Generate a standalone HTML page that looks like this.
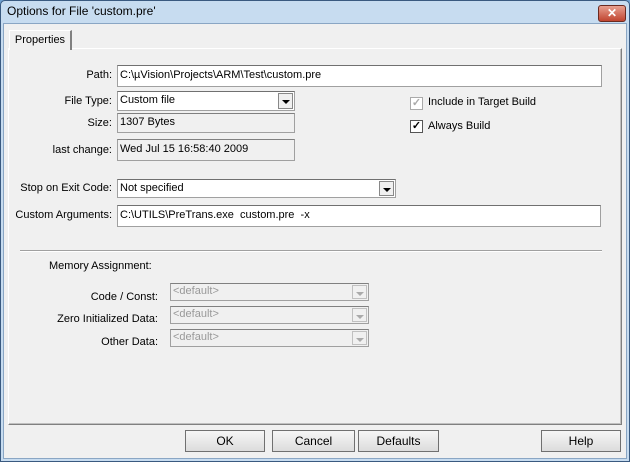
<!DOCTYPE html><html><head><style>
body{margin:0;width:630px;height:462px;overflow:hidden;background:#6fa0d0;font-family:"Liberation Sans",sans-serif;font-size:11px;color:#000}
.a{position:absolute}
.win{position:absolute;left:0;top:0;width:628px;height:460px;border:1px solid #3a5a80;background:#c7dcf0;border-radius:5px 5px 0 0}
.body{position:absolute;left:3px;top:23px;width:622px;height:434px;background:#f0f0f0;border:1px solid #8aa6c4}
.lbl{position:absolute;text-align:right;white-space:nowrap}
.inp{position:absolute;background:#fff;border:1px solid #a0a0a0;border-top-color:#707070;box-sizing:border-box;padding:1px 2px;white-space:nowrap;line-height:16px}
.ro{background:#f0f0f0;border:1px solid #a0a0a0;border-top-color:#808080}
.dd{position:absolute;right:1px;top:1px;width:15px;bottom:1px;background:#f0f0f0;border:1px solid #888;box-sizing:border-box}
.dd:after{content:"";position:absolute;left:3px;top:6px;border:4px solid transparent;border-top:4px solid #000;border-bottom:0}
.dis{color:#999}.dis .dd:after{border-top-color:#aaa}.dis .dd{border-color:#c0c0c0}
.btn{position:absolute;top:430px;height:22px;box-sizing:border-box;border:1px solid #707070;background:linear-gradient(#f6f6f6,#dcdcdc);text-align:center;line-height:20px;font-size:12px}
.cb{position:absolute;width:11px;height:11px;border:1px solid #555;background:#fff;font-size:11px;line-height:11px;text-align:center;font-weight:bold}
</style></head><body>
<div class="win"></div>
<div class="a" style="left:7px;top:4px;font-size:12px">Options for File 'custom.pre'</div>
<div class="a" style="left:598px;top:5px;width:26px;height:15px;border:1px solid #6b2a20;border-radius:3px;background:linear-gradient(#e8a090,#c04530);color:#fff;text-align:center;font-weight:bold;line-height:15px;font-size:12px">✕</div>
<div class="body"></div>
<div class="a" style="left:8px;top:48px;width:612px;height:375px;border:1px solid #fff;border-right-color:#808080;border-bottom-color:#808080;box-shadow:inset -1px -1px 0 #c0c0c0"></div>
<div class="a" style="left:9px;top:30px;width:60px;height:19px;border:1px solid #fff;border-right:2px solid #808080;border-bottom:none;background:#f0f0f0;text-align:center;line-height:18px">Properties</div>

<div class="lbl" style="right:518px;top:69px">Path:</div>
<div class="inp" style="left:117px;top:65px;width:485px;height:22px">C:\µVision\Projects\ARM\Test\custom.pre</div>
<div class="lbl" style="right:518px;top:95px">File Type:</div>
<div class="inp" style="left:117px;top:91px;width:178px;height:20px;line-height:15px">Custom file<div class="dd"></div></div>
<div class="lbl" style="right:518px;top:117px">Size:</div>
<div class="inp ro" style="left:117px;top:113px;width:178px;height:20px;line-height:15px">1307 Bytes</div>
<div class="lbl" style="right:518px;top:144px">last change:</div>
<div class="inp ro" style="left:117px;top:139px;width:178px;height:22px">Wed Jul 15 16:58:40 2009</div>

<div class="cb" style="left:410px;top:97px;color:#aaa;border-color:#aaa">✓</div>
<div class="a" style="left:428px;top:96px">Include in Target Build</div>
<div class="cb" style="left:410px;top:120px">✓</div>
<div class="a" style="left:428px;top:120px">Always Build</div>

<div class="lbl" style="right:518px;top:182px">Stop on Exit Code:</div>
<div class="inp" style="left:117px;top:179px;width:279px;height:19px;line-height:14px">Not specified<div class="dd"></div></div>
<div class="lbl" style="right:518px;top:209px">Custom Arguments:</div>
<div class="inp" style="left:117px;top:205px;width:484px;height:22px">C:\UTILS\PreTrans.exe&nbsp; custom.pre&nbsp; -x</div>

<div class="a" style="left:20px;top:250px;width:582px;height:0;border-top:1px solid #a0a0a0;border-bottom:1px solid #fff"></div>
<div class="a" style="left:49px;top:260px">Memory Assignment:</div>
<div class="lbl" style="right:472px;top:291px">Code / Const:</div>
<div class="inp ro dis" style="left:170px;top:283px;width:199px;height:18px;line-height:13px">&lt;default&gt;<div class="dd"></div></div>
<div class="lbl" style="right:472px;top:313px">Zero Initialized Data:</div>
<div class="inp ro dis" style="left:170px;top:306px;width:199px;height:18px;line-height:13px">&lt;default&gt;<div class="dd"></div></div>
<div class="lbl" style="right:472px;top:336px">Other Data:</div>
<div class="inp ro dis" style="left:170px;top:329px;width:199px;height:18px;line-height:13px">&lt;default&gt;<div class="dd"></div></div>

<div class="btn" style="left:185px;width:80px">OK</div>
<div class="btn" style="left:272px;width:83px">Cancel</div>
<div class="btn" style="left:358px;width:81px">Defaults</div>
<div class="btn" style="left:541px;width:80px">Help</div>
</body></html>
